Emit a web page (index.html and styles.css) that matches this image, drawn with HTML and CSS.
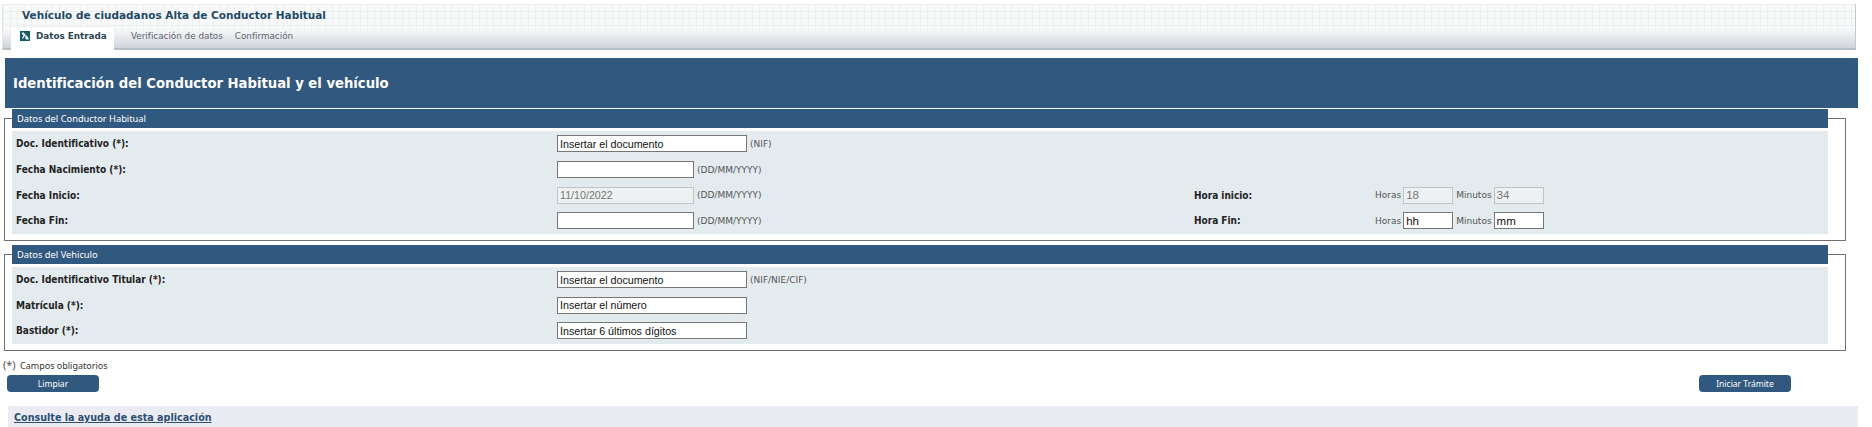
FILE: index.html
```html
<!DOCTYPE html>
<html lang="es">
<head>
  <meta charset="UTF-8">
  <title>Alta de Conductor Habitual</title>
  <link rel="stylesheet" href="styles.css">
</head>
<body>
  <div class="top-header">
    <div class="app-title">Vehículo de ciudadanos Alta de Conductor Habitual</div>
    <div class="tabs">
      <div class="tab tab-active">
        <svg class="tab-icon" width="10" height="10" viewBox="0 0 10 10"><rect width="10" height="10" fill="#17596b"/><path d="M2 2l3 3M5 2.500L2.500 7.500M2.500 2h1.500M6 8V4.500M6 8h2.500M6 4.500l2.500 3.500" stroke="#fff" stroke-width="1.200" fill="none"/></svg>
        <span>Datos Entrada</span>
      </div>
      <div class="tab">Verificación de datos</div>
      <div class="tab">Confirmación</div>
    </div>
  </div>

  <h1 class="page-band">Identificación del Conductor Habitual y el vehículo</h1>

  <div class="group group-driver">
    <div class="group-title">Datos del Conductor Habitual</div>
    <div class="group-body">
      <div class="row">
        <label class="field-label">Doc. Identificativo (*):</label>
        <div class="field"><input class="input-long" type="text" value="Insertar el documento"><span class="hint">(NIF)</span></div>
      </div>
      <div class="row">
        <label class="field-label">Fecha Nacimiento (*):</label>
        <div class="field"><input class="input-date" type="text"><span class="hint">(DD/MM/YYYY)</span></div>
      </div>
      <div class="row">
        <label class="field-label">Fecha Inicio:</label>
        <div class="field"><input class="input-date" type="text" value="11/10/2022" disabled><span class="hint">(DD/MM/YYYY)</span></div>
        <label class="field-label">Hora inicio:</label>
        <div class="field field-time">
          <span class="time-label">Horas</span><input class="input-time" type="text" value="18" disabled>
          <span class="time-label">Minutos</span><input class="input-time" type="text" value="34" disabled>
        </div>
      </div>
      <div class="row">
        <label class="field-label">Fecha Fin:</label>
        <div class="field"><input class="input-date" type="text"><span class="hint">(DD/MM/YYYY)</span></div>
        <label class="field-label">Hora Fin:</label>
        <div class="field field-time">
          <span class="time-label">Horas</span><input class="input-time" type="text" value="hh">
          <span class="time-label">Minutos</span><input class="input-time" type="text" value="mm">
        </div>
      </div>
    </div>
  </div>

  <div class="group group-vehicle">
    <div class="group-title">Datos del Vehiculo</div>
    <div class="group-body">
      <div class="row">
        <label class="field-label">Doc. Identificativo Titular (*):</label>
        <div class="field"><input class="input-long" type="text" value="Insertar el documento"><span class="hint">(NIF/NIE/CIF)</span></div>
      </div>
      <div class="row">
        <label class="field-label">Matrícula (*):</label>
        <div class="field"><input class="input-long" type="text" value="Insertar el número"></div>
      </div>
      <div class="row">
        <label class="field-label">Bastidor (*):</label>
        <div class="field"><input class="input-long" type="text" value="Insertar 6 últimos dígitos"></div>
      </div>
    </div>
  </div>

  <div class="required-note"><span class="required-mark">(*)</span> Campos obligatorios</div>

  <div class="actions">
    <button class="action-button">Limpiar</button>
    <button class="action-button">Iniciar Trámite</button>
  </div>

  <div class="help-band"><a href="#">Consulte la ayuda de esta aplicación</a></div>
</body>
</html>
```

FILE: styles.css
```css
html, body { height: 427px; overflow: hidden; }
body {
  margin: 0;
  background-color: white;
  font-family: "DejaVu Sans", Verdana, sans-serif;
  font-size: 10px;
  color: #222;
}

.top-header {
  height: 44px;
  margin: 4px 16px 0 2px;
  border-left: 1px solid #e4e6e9;
  border-right: 1px solid #c4cad0;
  border-bottom: 2px solid #b4bfc8;
  background-color: #f8f9f9;
  background-image:
    linear-gradient(to bottom, rgba(248,249,249,0) 0, rgba(248,249,249,0) 24px, #f2f3f5 28px, #cfd4da 44px),
    repeating-linear-gradient(to right, #eeeff2 0, #eeeff2 1px, transparent 1px, transparent 7px),
    repeating-linear-gradient(to bottom, #eeeff2 0, #eeeff2 1px, transparent 1px, transparent 7px);
}
.app-title {
  height: 24px;
  padding-left: 19px;
  line-height: 22px;
  font-size: 10.500px;
  font-weight: bold;
  color: #1d4a68;
}
.tabs {
  display: flex;
  height: 22px;
  padding-left: 8px;
}
.tab {
  display: flex;
  align-items: center;
  height: 20px;
  padding: 0 6px 4px;
  box-sizing: border-box;
  font-size: 8.800px;
  color: #5d6670;
}
.tab-active {
  gap: 6px;
  flex: none;
  width: 103px;
  height: 22px;
  margin-right: 11px;
  padding: 0 0 6px 9px;
  background-color: white;
  font-weight: bold;
  white-space: nowrap;
  color: #2d4256;
}
.tab-icon { flex: none; }

.page-band {
  height: 50px;
  margin: 8px 14px 0 5px;
  padding-left: 8px;
  background-color: #31587f;
  color: white;
  font-size: 13.200px;
  font-weight: bold;
  line-height: 52px;
}

.group {
  margin: 0 26px 0 4px;
  padding: 0 17px 6px 7px;
  border: 1px solid #707070;
}
.group-driver { margin-top: 10px; }
.group-vehicle { margin-top: 13px; }
.group-title {
  height: 19px;
  margin-top: -10px;
  padding-left: 5px;
  background-color: #31587f;
  color: white;
  font-family: "Noto Sans", sans-serif;
  font-size: 9.300px;
  line-height: 19px;
}
.group-body {
  margin-top: 3px;
  padding-left: 4px;
  background-color: #e4ebef;
}

.row {
  display: grid;
  grid-template-columns: 541px 637px 181px 1fr;
  align-items: center;
  height: 25.700px;
}
.field-label {
  font-family: "DejaVu Sans Condensed", "DejaVu Sans", sans-serif;
  font-weight: bold;
  font-size: 10px;
  color: #222;
}
.field { display: flex; align-items: center; }

input {
  height: 17px;
  box-sizing: border-box;
  margin: 0;
  padding: 0 2px;
  border: 1px solid #767676;
  background-color: white;
  font-family: "Liberation Sans", Arial, sans-serif;
  font-size: 10.700px;
  color: #111;
}
input:disabled {
  border-color: #c0c4c6;
  background-color: #eef1f2;
  color: #777;
}
.input-long { width: 190px; }
.input-date { width: 137px; }
.input-time { width: 50px; font-size: 11.500px; }

.hint { margin-left: 3px; font-size: 9px; color: #555; }
.time-label { font-size: 9px; color: #555; }
.field-time .time-label { margin-right: 2px; }
.field-time .input-time + .time-label { margin-left: 3px; }

.required-note {
  margin: 8px 0 0 3px;
  height: 16px;
  line-height: 13px;
  font-family: "Noto Sans", sans-serif;
  font-size: 9px;
  color: #333;
}
.required-mark { margin-right: 2px; font-size: 11px; line-height: 1; color: #555; }

.actions {
  display: flex;
  justify-content: space-between;
  margin: 0 81px 0 7px;
}
.action-button {
  width: 92px;
  height: 17px;
  padding: 0;
  border: none;
  border-radius: 4px;
  background-color: #31587f;
  color: white;
  font-family: "Noto Sans", sans-serif;
  font-size: 8.500px;
}

.help-band {
  height: 21px;
  margin: 14px 14px 0 8px;
  padding-left: 6px;
  background-color: #ebebf3;
  font-size: 9.600px;
  font-weight: bold;
  line-height: 24px;
}
.help-band a { color: #2c4f74; }
```
